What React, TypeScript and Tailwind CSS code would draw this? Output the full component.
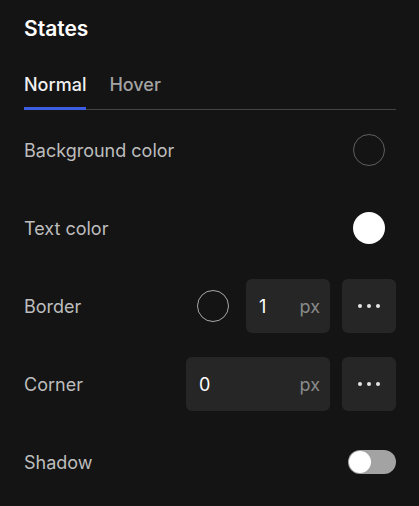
import React from 'react';

function Dots() {
  return (
    <button className="flex h-[54px] w-[54px] items-center justify-center gap-[5px] rounded-md bg-[#262626]">
      <span className="h-[4px] w-[4px] rounded-full bg-[#e5e5e5]" />
      <span className="h-[4px] w-[4px] rounded-full bg-[#e5e5e5]" />
      <span className="h-[4px] w-[4px] rounded-full bg-[#e5e5e5]" />
    </button>
  );
}

function PxInput({ value, width }: { value: string; width: string }) {
  return (
    <div className={`flex h-[54px] ${width} items-center justify-between rounded-md bg-[#262626] pl-[13px] pr-[10px]`}>
      <span className="text-[18px] text-white">{value}</span>
      <span className="text-[18px] text-[#8a8a8a]">px</span>
    </div>
  );
}

function Row({ label, children }: { label: string; children: React.ReactNode }) {
  return (
    <div className="flex h-[54px] items-center justify-between">
      <span className="text-[18px] text-[#bdbdbd]">{label}</span>
      <div className="flex items-center">{children}</div>
    </div>
  );
}

export default function App() {
  return (
    <div
      className="min-h-screen w-full bg-[#141414] pl-[24px] pr-[23px] pt-[15px]"
      style={{ fontFamily: 'Inter, "Noto Sans", sans-serif' }}
    >
      <h2 className="text-[21px] font-semibold leading-[28px] text-white">States</h2>

      <div className="mt-[30px] flex border-b border-[#444444]">
        <div className="relative pb-[12px]">
          <span className="text-[18px] font-medium leading-[24px] text-[#f0f0f0]">Normal</span>
          <span className="absolute bottom-[-1px] left-0 right-0 h-[3px] bg-[#3d5ee0]" />
        </div>
        <div className="ml-[23px] pb-[12px]">
          <span className="text-[18px] font-medium leading-[24px] text-[#a3a3a3]">Hover</span>
        </div>
      </div>

      <div className="mt-[13px] flex flex-col gap-[24px]">
        <Row label="Background color">
          <span className="mr-[11px] h-[32px] w-[32px] rounded-full border border-[#5f5f5f] bg-[#141414]" />
        </Row>
        <Row label="Text color">
          <span className="mr-[11px] h-[32px] w-[32px] rounded-full bg-white" />
        </Row>
        <Row label="Border">
          <span className="mr-[17px] h-[32px] w-[32px] rounded-full border border-[#a8a8a8]" />
          <PxInput value="1" width="w-[84px]" />
          <div className="ml-[12px]">
            <Dots />
          </div>
        </Row>
        <Row label="Corner">
          <PxInput value="0" width="w-[144px]" />
          <div className="ml-[12px]">
            <Dots />
          </div>
        </Row>
        <Row label="Shadow">
          <div className="flex h-[24px] w-[48px] items-center rounded-full bg-[#a3a3a3] px-[1px]">
            <span className="h-[22px] w-[22px] rounded-full bg-white" />
          </div>
        </Row>
      </div>
    </div>
  );
}
